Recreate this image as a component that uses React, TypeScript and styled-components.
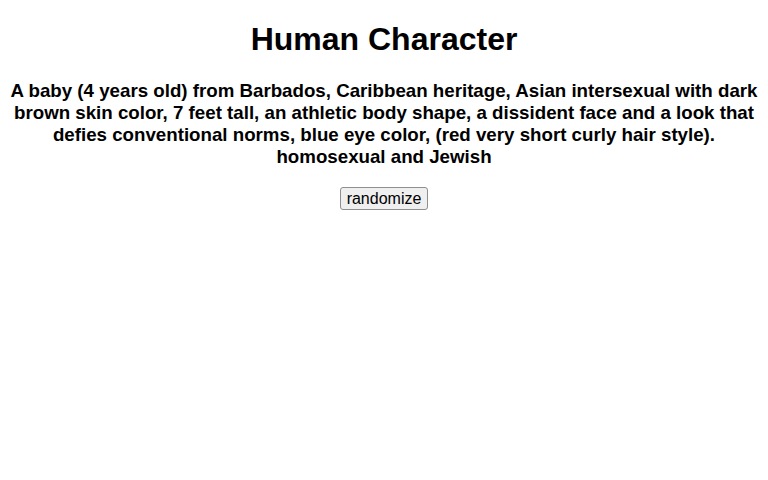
import React, { useState } from "react";
import styled, { createGlobalStyle } from "styled-components";

const GlobalStyle = createGlobalStyle`
  body {
    margin: 0;
    background: #ffffff;
    color: #000000;
    font-family: "Liberation Sans", Arial, sans-serif;
  }
`;

const Page = styled.main`
  text-align: center;
  padding: 0 8px;
`;

const Title = styled.h1`
  font-size: 32px;
  font-weight: bold;
  margin: 21.44px 0;
`;

const Description = styled.h3`
  font-size: 18.72px;
  font-weight: bold;
  margin: 18.72px 0;
`;

const RandomizeButton = styled.button`
  font-family: "Liberation Sans", Arial, sans-serif;
  font-size: 16px;
  line-height: 17px;
  padding: 2px 6px;
  color: #000;
  background: #efefef;
  border: 1px solid #8f8f8f;
  border-radius: 3px;
  cursor: pointer;
  &:hover {
    background: #e5e5e5;
  }
`;

const descriptions = [
  "A baby (4 years old) from Barbados, Caribbean heritage, Asian intersexual with dark brown skin color, 7 feet tall, an athletic body shape, a dissident face and a look that defies conventional norms, blue eye color, (red very short curly hair style). homosexual and Jewish",
];

export default function App() {
  const [index, setIndex] = useState(0);
  return (
    <Page>
      <GlobalStyle />
      <Title>Human Character</Title>
      <Description>{descriptions[index]}</Description>
      <RandomizeButton onClick={() => setIndex((index + 1) % descriptions.length)}>
        randomize
      </RandomizeButton>
    </Page>
  );
}
